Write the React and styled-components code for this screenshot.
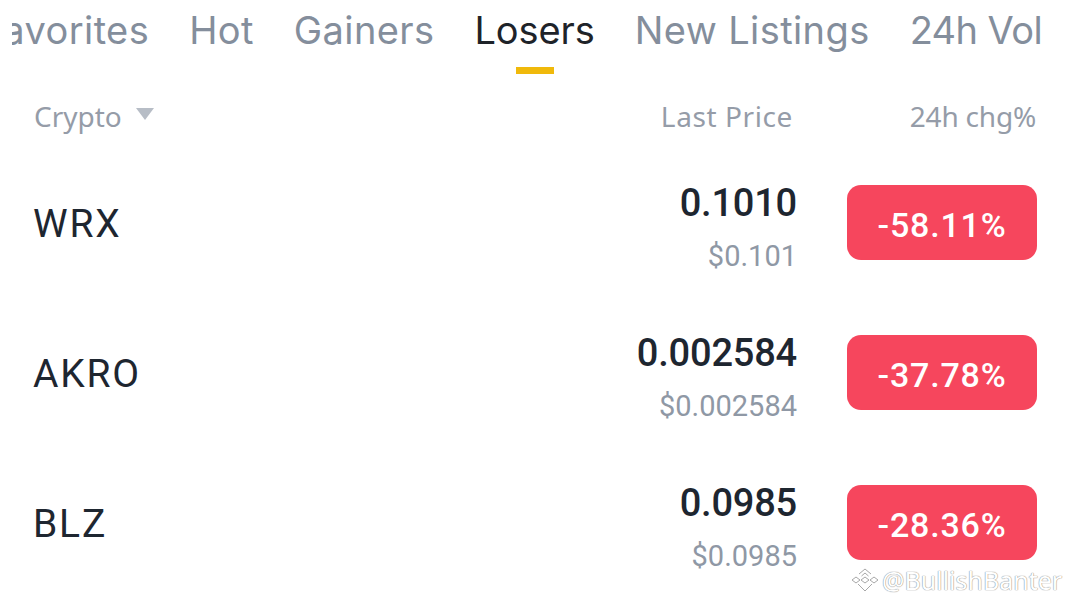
import React from 'react';
import styled, { createGlobalStyle } from 'styled-components';

const GlobalStyle = createGlobalStyle`
  html, body {
    margin: 0;
    padding: 0;
    background: #fff;
  }
  body {
    width: 1069px;
    height: 601px;
    overflow: hidden;
    font-family: "Noto Sans", "Liberation Sans", sans-serif;
  }
`;

const Page = styled.div`
  position: relative;
  width: 1069px;
  height: 601px;
  overflow: hidden;
`;

const Tabs = styled.nav`
  display: flex;
  justify-content: flex-end;
  gap: 40px;
  height: 75px;
  margin-left: 12px;
  padding-right: 27px;
  overflow: hidden;
`;

const Tab = styled.div`
  position: relative;
  flex-shrink: 0;
  font-family: Inter, "Noto Sans", sans-serif;
  font-size: 38px;
  line-height: 60px;
  letter-spacing: ${(p) => p.$spacing}px;
  color: ${(p) => (p.$active ? '#1e2329' : '#848e9c')};

  &::after {
    content: ${(p) => (p.$active ? '""' : 'none')};
    position: absolute;
    left: 50%;
    bottom: 1px;
    width: 38px;
    height: 7px;
    margin-left: -19px;
    background: #f0b90b;
  }
`;

const Head = styled.div`
  display: grid;
  grid-template-columns: 1fr 190px;
  column-gap: 50px;
  align-items: center;
  height: 63px;
  padding: 9px 33px 0 34px;
  font-size: 28px;
  color: #959ca8;
`;

const HeadLeft = styled.div`
  display: flex;
  align-items: center;
  justify-content: space-between;
`;

const CryptoSort = styled.div`
  display: flex;
  align-items: center;
  gap: 14px;
`;

const Caret = styled.span`
  width: 0;
  height: 0;
  margin-top: -4px;
  border-left: 9.5px solid transparent;
  border-right: 9.5px solid transparent;
  border-top: 12px solid #b7bdc6;
`;

const LastPrice = styled.span`
  margin-right: 3px;
  letter-spacing: 0.6px;
`;

const HeadRight = styled.div`
  text-align: right;
  letter-spacing: -0.2px;
`;

const Row = styled.div`
  display: grid;
  grid-template-columns: 1fr 190px;
  column-gap: 50px;
  align-items: center;
  height: 150px;
  padding: 0 32px 0 34px;
`;

const RowLeft = styled.div`
  display: flex;
  align-items: center;
  justify-content: space-between;
`;

const Symbol = styled.div`
  margin-left: -1px;
  padding-top: 4px;
  font-family: Roboto, sans-serif;
  font-size: 39px;
  letter-spacing: 1.8px;
  color: #1e2630;
`;

const Prices = styled.div`
  display: flex;
  flex-direction: column;
  align-items: flex-end;
  gap: 10px;
  padding-top: 10px;
`;

const Price = styled.div`
  font-family: Roboto, sans-serif;
  font-size: 38px;
  font-weight: 500;
  line-height: 48px;
  letter-spacing: -0.2px;
  color: #1e2630;
`;

const Fiat = styled.div`
  font-family: Roboto, sans-serif;
  font-size: 29px;
  line-height: 38px;
  color: #8f98a5;
`;

const Badge = styled.div`
  display: flex;
  align-items: center;
  justify-content: center;
  height: 75px;
  padding-top: 6px;
  box-sizing: border-box;
  border-radius: 14px;
  background: #f6465d;
  color: #fff;
  font-family: Roboto, sans-serif;
  font-size: 34px;
  font-weight: 500;
  letter-spacing: 0.8px;
`;

const Watermark = styled.div`
  position: absolute;
  left: 851px;
  top: 566px;
  display: flex;
  align-items: center;
  gap: 3px;
  font-size: 25px;
  line-height: 28px;
  color: #fff;
  text-shadow: 0 0 1px #8a8a8a, 0 0 1px #8a8a8a;
`;

const rows = [
  { symbol: 'WRX', price: '0.1010', fiat: '$0.101', change: '-58.11%' },
  { symbol: 'AKRO', price: '0.002584', fiat: '$0.002584', change: '-37.78%' },
  { symbol: 'BLZ', price: '0.0985', fiat: '$0.0985', change: '-28.36%' },
];

const tabs = [
  { label: 'Favorites', spacing: 0.4 },
  { label: 'Hot', spacing: 0.4 },
  { label: 'Gainers', spacing: 0.4 },
  { label: 'Losers', spacing: -0.1 },
  { label: 'New Listings', spacing: 0.4 },
  { label: '24h Vol', spacing: -0.6 },
];

const BinanceMark = () => (
  <svg width="28" height="24" viewBox="0 0 28 24" fill="none" stroke="#a8a8a8" strokeWidth="1">
    <path d="M8 6l6-5 6 5M10.5 8L14 5l3.5 3M1 12l4-3 4 3-4 3zM19 12l4-3 4 3-4 3zM10 12l4-3 4 3-4 3zM7 16l7 7 7-7" />
  </svg>
);

const App = () => (
  <Page>
    <GlobalStyle />
    <Tabs>
      {tabs.map((t) => (
        <Tab key={t.label} $active={t.label === 'Losers'} $spacing={t.spacing}>{t.label}</Tab>
      ))}
    </Tabs>
    <Head>
      <HeadLeft>
        <CryptoSort>Crypto <Caret /></CryptoSort>
        <LastPrice>Last Price</LastPrice>
      </HeadLeft>
      <HeadRight>24h chg%</HeadRight>
    </Head>
    {rows.map((r) => (
      <Row key={r.symbol}>
        <RowLeft>
          <Symbol>{r.symbol}</Symbol>
          <Prices>
            <Price>{r.price}</Price>
            <Fiat>{r.fiat}</Fiat>
          </Prices>
        </RowLeft>
        <Badge>{r.change}</Badge>
      </Row>
    ))}
    <Watermark>
      <BinanceMark />
      @BullishBanter
    </Watermark>
  </Page>
);

export default App;
